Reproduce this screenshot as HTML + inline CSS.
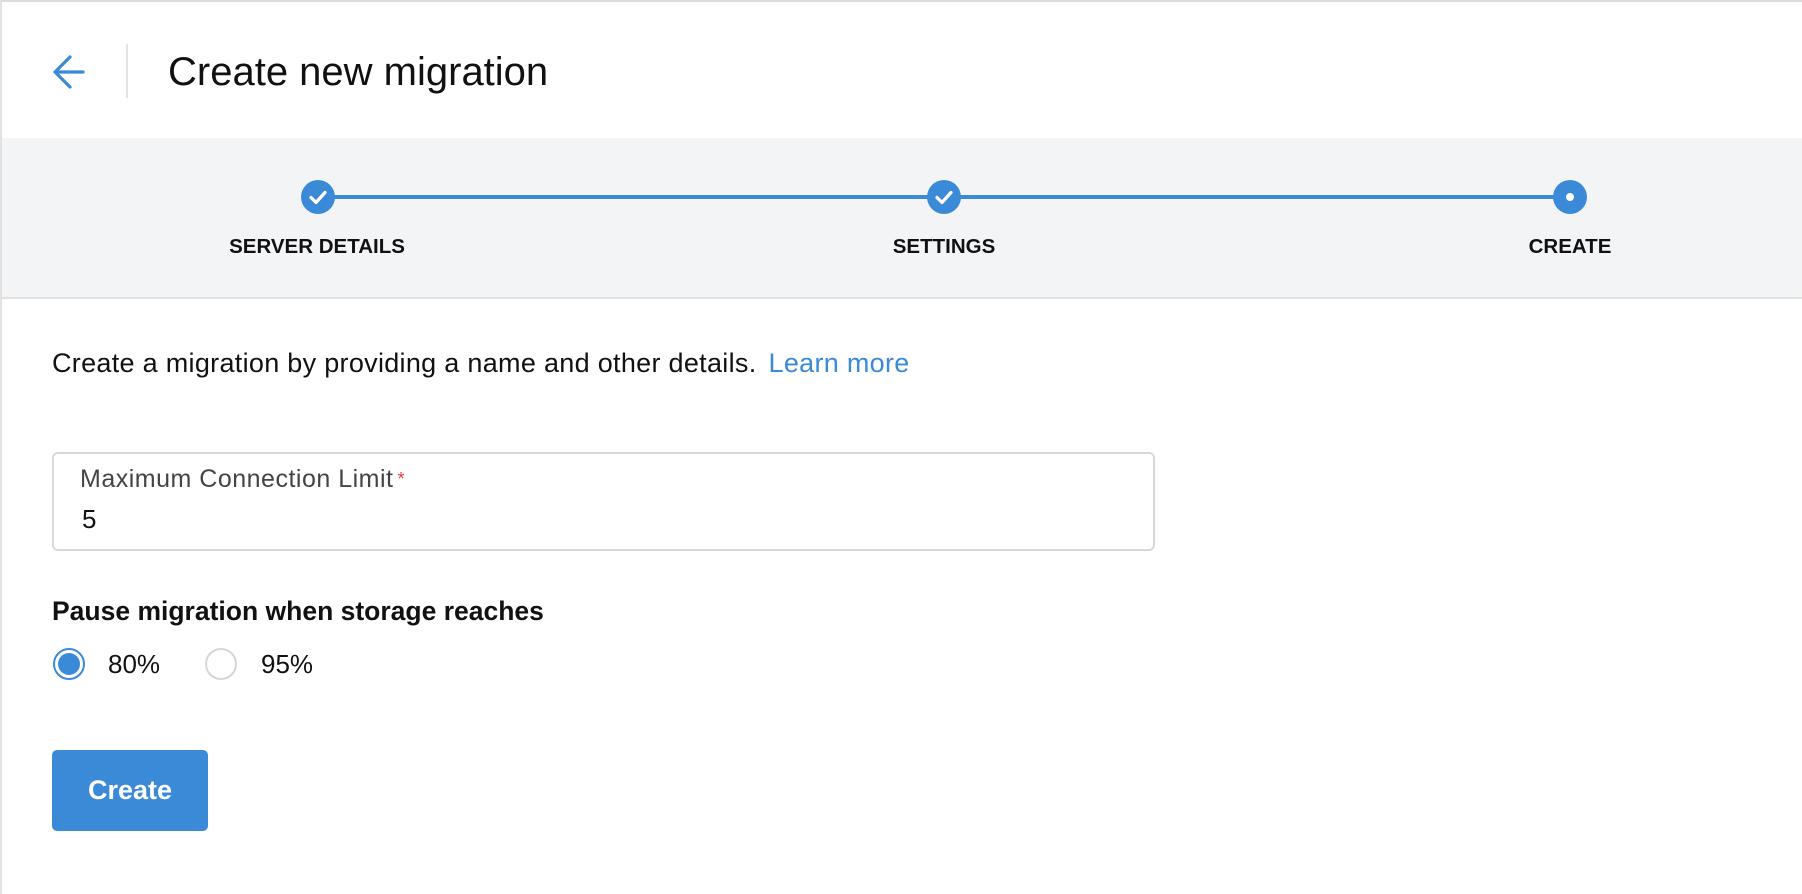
<!DOCTYPE html>
<html><head><meta charset="utf-8"><style>
*{margin:0;padding:0;box-sizing:border-box}
body{width:1802px;height:894px;background:#fff;font-family:"Liberation Sans",Arial,sans-serif;color:#111;position:relative;overflow:hidden;border-top:2px solid #dcdcdc;border-left:2px solid #e2e2e2}
.abs{position:absolute;white-space:nowrap}
</style></head><body>
<svg class="abs" style="left:50px;top:52px" width="34" height="36" viewBox="0 0 34 36"><path d="M31 18H4M18 3L3 18l15 15" fill="none" stroke="#3b8ad8" stroke-width="3.2" stroke-linecap="round" stroke-linejoin="round"/></svg>
<div class="abs" style="left:124px;top:42px;width:2px;height:54px;background:#e4e4e4"></div>
<div class="abs" style="left:166px;top:48px;font-size:40px;line-height:44px;color:#111">Create new migration</div>
<div class="abs" style="left:0;top:136px;width:1802px;height:161px;background:#f3f4f6;border-bottom:2px solid #e2e2e2"></div>
<div class="abs" style="left:316px;top:193px;width:1252px;height:4px;background:#3b8ad8"></div>
<svg class="abs" style="left:298px;top:177px" width="36" height="36"><circle cx="18" cy="18" r="17" fill="#3b8ad8"/><path d="M11 18.5l5 5 9-10" fill="none" stroke="#fff" stroke-width="3.2" stroke-linecap="round" stroke-linejoin="round"/></svg>
<svg class="abs" style="left:924px;top:177px" width="36" height="36"><circle cx="18" cy="18" r="17" fill="#3b8ad8"/><path d="M11 18.5l5 5 9-10" fill="none" stroke="#fff" stroke-width="3.2" stroke-linecap="round" stroke-linejoin="round"/></svg>
<svg class="abs" style="left:1550px;top:177px" width="36" height="36"><circle cx="18" cy="18" r="17" fill="#3b8ad8"/><circle cx="18" cy="18" r="4" fill="#fff"/></svg>
<div class="abs" style="left:215px;width:200px;text-align:center;top:233px;font-size:20.5px;font-weight:bold;line-height:24px">SERVER DETAILS</div>
<div class="abs" style="left:842px;width:200px;text-align:center;top:233px;font-size:20.5px;font-weight:bold;line-height:24px">SETTINGS</div>
<div class="abs" style="left:1468px;width:200px;text-align:center;top:233px;font-size:20.5px;font-weight:bold;line-height:24px">CREATE</div>
<div class="abs" style="left:50px;top:345px;font-size:27px;line-height:32px;color:#111;letter-spacing:0.3px">Create a migration by providing a name and other details.<span style="color:#3b8ad8;margin-left:12px">Learn more</span></div>
<div class="abs" style="left:50px;top:450px;width:1103px;height:99px;border:2px solid #d8d8d8;border-radius:6px"></div>
<div class="abs" style="left:78px;top:463px;font-size:25px;line-height:28px;color:#444;letter-spacing:0.5px">Maximum Connection Limit<span style="color:#e53935;font-size:18px;vertical-align:top;margin-left:4px">*</span></div>
<div class="abs" style="left:80px;top:502px;font-size:26px;line-height:30px;color:#111">5</div>
<div class="abs" style="left:50px;top:594px;font-size:26.5px;font-weight:bold;line-height:30px">Pause migration when storage reaches</div>
<div class="abs" style="left:51px;top:646px;width:32px;height:32px;border:2px solid #3b8ad8;border-radius:50%;background:#fff"></div>
<div class="abs" style="left:56px;top:651px;width:22px;height:22px;border-radius:50%;background:#3b8ad8"></div>
<div class="abs" style="left:106px;top:647px;font-size:26px;line-height:30px">80%</div>
<div class="abs" style="left:203px;top:646px;width:32px;height:32px;border:2px solid #d6d6d6;border-radius:50%;background:#fff"></div>
<div class="abs" style="left:259px;top:647px;font-size:26px;line-height:30px">95%</div>
<div class="abs" style="left:50px;top:748px;width:156px;height:81px;background:#3b8ad8;border-radius:5px;color:#fff;font-weight:bold;font-size:27px;line-height:81px;text-align:center">Create</div>
</body></html>
